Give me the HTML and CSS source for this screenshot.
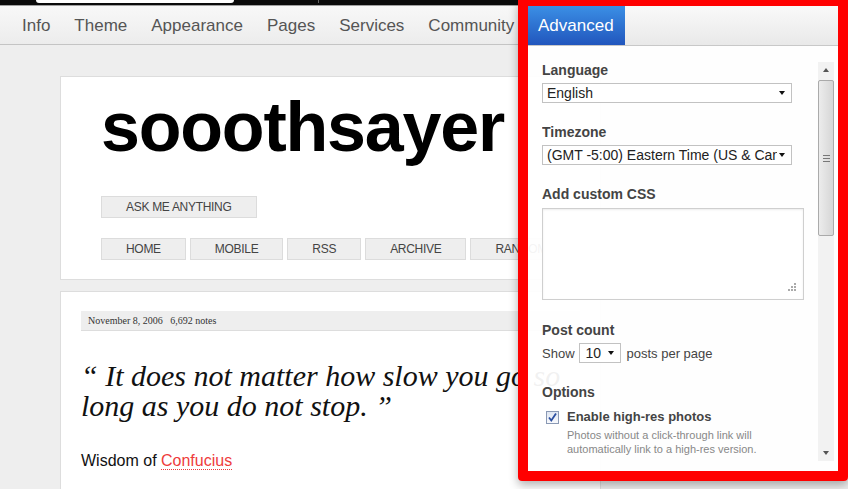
FILE: index.html
```html
<!DOCTYPE html>
<html lang="en">
<head>
    <meta charset="UTF-8">
    <meta name="viewport" content="width=device-width, initial-scale=1.0">
    <title>sooothsayer - Customize</title>
    <link rel="stylesheet" href="styles.css">
</head>
<body>

<div class="topbar">
    <span class="search"></span>
    <span class="tick"></span>
</div>

<nav class="menu">
    <a href="#">Info</a>
    <a href="#">Theme</a>
    <a href="#">Appearance</a>
    <a href="#">Pages</a>
    <a href="#">Services</a>
    <a href="#">Community</a>
</nav>

<main class="page">
    <div class="card blog-header">
        <h1 class="blog-title">sooothsayer</h1>
        <div class="button-row">
            <a class="btn" href="#">ASK ME ANYTHING</a>
        </div>
        <div class="button-row">
            <a class="btn" href="#">HOME</a>
            <a class="btn" href="#">MOBILE</a>
            <a class="btn" href="#">RSS</a>
            <a class="btn" href="#">ARCHIVE</a>
            <a class="btn" href="#">RANDOM</a>
        </div>
    </div>

    <div class="card post">
        <div class="post-meta">November 8, 2006 &nbsp; 6,692 notes</div>
        <blockquote class="quote">“ It does not matter how slow you go so long as you do not stop. ”</blockquote>
        <p class="source">Wisdom of <a href="#">Confucius</a></p>
    </div>
</main>

<aside class="panel">
    <div class="panel-tabs">
        <span class="tab active">Advanced</span>
    </div>
    <div class="panel-body">
        <div class="panel-content">
            <div class="field">
                <label>Language</label>
                <div class="select wide"><span class="select-text">English</span><span class="arrow"></span></div>
            </div>
            <div class="field">
                <label>Timezone</label>
                <div class="select wide"><span class="select-text">(GMT -5:00) Eastern Time (US &amp; Canada)</span><span class="arrow"></span></div>
            </div>
            <div class="field field-css">
                <label>Add custom CSS</label>
                <div class="textarea">
                    <svg class="grip" width="8" height="8" viewBox="0 0 8 8">
                        <rect x="6" y="0" width="2" height="2" fill="#aaa"/>
                        <rect x="3" y="3" width="2" height="2" fill="#aaa"/>
                        <rect x="6" y="3" width="2" height="2" fill="#aaa"/>
                        <rect x="0" y="6" width="2" height="2" fill="#aaa"/>
                        <rect x="3" y="6" width="2" height="2" fill="#aaa"/>
                        <rect x="6" y="6" width="2" height="2" fill="#aaa"/>
                    </svg>
                </div>
            </div>
            <div class="field">
                <label>Post count</label>
                <div class="inline-row">
                    <span>Show</span>
                    <div class="select small"><span class="select-text">10</span><span class="arrow"></span></div>
                    <span>posts per page</span>
                </div>
            </div>
            <div class="field">
                <label>Options</label>
                <div class="option">
                    <span class="checkbox">
                        <svg width="11" height="11" viewBox="0 0 11 11">
                            <path d="M2 5.5 L4.3 8.5 L9 1.5" fill="none" stroke="#2b4fa0" stroke-width="1.8"/>
                        </svg>
                    </span>
                    <div>
                        <div class="option-title">Enable high-res photos</div>
                        <div class="option-desc">Photos without a click-through link will automatically link to a high-res version.</div>
                    </div>
                </div>
            </div>
        </div>
        <div class="scrollbar">
            <span class="sb-btn"><span class="sb-up"></span></span>
            <span class="sb-thumb"><span class="sb-grip"></span></span>
            <span class="sb-space"></span>
            <span class="sb-btn"><span class="sb-down"></span></span>
        </div>
    </div>
</aside>

</body>
</html>
```

FILE: styles.css
```css
body {
    margin: 0;
    background-color: #eeeeee;
    font-family: "Liberation Sans", Arial, sans-serif;
    overflow: hidden;
}
a {
    text-decoration: none;
}

/* top strip */
.topbar {
    height: 5px;
    background-color: #0b0b0b;
    border-bottom: 1px solid #a0a0a0;
    display: flex;
    align-items: flex-start;
    padding-left: 36px;
}
.search {
    width: 198px;
    height: 3px;
    background-color: #fff;
    border-radius: 0 0 3px 3px;
}
.tick {
    width: 1px;
    height: 3px;
    margin-left: 84px;
    background-color: #666;
}

.menu {
    height: 36px;
    padding: 2px 0 0 10px;
    background: linear-gradient(#f8f8f8, #ececec);
    border-bottom: 1px solid #c4c4c4;
    display: flex;
    align-items: center;
}
.menu a {
    padding: 0 12px;
    font-size: 17px;
    color: #555;
}

/* blog preview */
.page {
    padding: 31px 0 0 60px;
}
.card {
    width: 541px;
    box-sizing: border-box;
    background-color: #fff;
    border: 1px solid #dddddd;
}
.blog-header {
    padding: 15px 40px 19px;
}
.blog-title {
    margin: 0 0 34px;
    font-size: 70px;
    line-height: 70px;
    font-weight: bold;
    letter-spacing: -1.2px;
    color: #000;
}
.button-row {
    display: flex;
    gap: 4px;
    margin-bottom: 20px;
}
.button-row:last-child {
    margin-bottom: 0;
}
.btn {
    flex-shrink: 0;
    height: 20px;
    line-height: 20px;
    padding: 0 24px;
    border: 1px solid #dcdcdc;
    background-color: #eeeeee;
    font-size: 12px;
    letter-spacing: -0.3px;
    color: #444;
}

.post {
    margin-top: 11px;
    padding: 19px 20px 40px;
}
.post-meta {
    height: 19px;
    line-height: 19px;
    padding-left: 7px;
    background-color: #eeeeee;
    border-bottom: 1px solid #dddddd;
    font-family: "Liberation Serif", "Times New Roman", serif;
    font-size: 10px;
    color: #333;
}
.quote {
    margin: 30px 0 0;
    font-family: "Liberation Serif", "Times New Roman", serif;
    font-style: italic;
    font-size: 30px;
    line-height: 30px;
    color: #111;
}
.source {
    margin: 30px 0 0;
    font-size: 16px;
    line-height: 20px;
    color: #111;
}
.source a {
    color: #ee3b3b;
    border-bottom: 1px dotted #ee3b3b;
}

/* customize panel */
.panel {
    position: absolute;
    top: 0;
    right: 0;
    width: 330px;
    height: 481px;
    box-sizing: border-box;
    border: solid #ff0000;
    border-width: 6px 10px 10px 10px;
    border-radius: 0 0 4px 4px;
    display: flex;
    flex-direction: column;
    box-shadow: 0 4px 10px rgba(0, 0, 0, 0.3);
}
.panel-tabs {
    height: 39px;
    flex-shrink: 0;
    display: flex;
    background: linear-gradient(#f9f9f9, #e9e9e9);
    border-bottom: 1px solid #c8c8c8;
}
.tab {
    padding: 0 11px 0 10px;
    line-height: 39px;
    font-size: 17px;
    color: #fff;
}
.tab.active {
    background: linear-gradient(#3b8fe5, #2156bd);
}
.panel-body {
    flex: 1;
    display: flex;
    padding: 16px 4px 10px 14px;
    background-color: rgba(255, 255, 255, 0.94);
    overflow: hidden;
}
.panel-content {
    flex: 1;
    overflow: hidden;
}
.field {
    margin-bottom: 21px;
}
.field label {
    display: block;
    margin-bottom: 5px;
    font-size: 14px;
    line-height: 16px;
    font-weight: bold;
    color: #444;
}
.field-css {
    margin-bottom: 22px;
}
.field-css label {
    margin-bottom: 6px;
}
.select {
    position: relative;
    height: 20px;
    box-sizing: border-box;
    border: 1px solid #c2c2c2;
    background-color: #fff;
    font-size: 14px;
    line-height: 18px;
    color: #222;
}
.select.wide {
    width: 250px;
}
.select.small {
    width: 42px;
}
.select-text {
    display: block;
    padding-left: 4px;
    margin-right: 4px;
    white-space: nowrap;
    overflow: hidden;
}
.small .select-text {
    padding-left: 6px;
}
.arrow {
    position: absolute;
    right: 2px;
    top: 0;
    width: 12px;
    height: 18px;
    background-color: #fff;
}
.arrow::after {
    content: "";
    position: absolute;
    left: 2px;
    top: 7px;
    border-style: solid;
    border-width: 4px 3.5px 0 3.5px;
    border-color: #111 transparent transparent transparent;
}
.textarea {
    position: relative;
    height: 92px;
    box-sizing: border-box;
    border: 1px solid #cfcfcf;
    box-shadow: inset 0 1px 2px rgba(0, 0, 0, 0.08);
    background-color: #fff;
}
.grip {
    position: absolute;
    right: 7px;
    bottom: 8px;
}
.inline-row {
    display: flex;
    align-items: center;
    gap: 4px;
    font-size: 13px;
    color: #444;
}
.inline-row .select {
    margin-right: 2px;
}
.option {
    display: flex;
    gap: 8px;
    margin-top: 8px;
    padding-left: 4px;
}
.checkbox {
    width: 13px;
    height: 13px;
    margin-top: 3px;
    flex-shrink: 0;
    box-sizing: border-box;
    border: 1px solid #8a99b4;
    background: linear-gradient(#dfe6f2, #f8f9fc);
    display: flex;
    align-items: center;
    justify-content: center;
}
.option-title {
    font-size: 13px;
    line-height: 18px;
    font-weight: bold;
    color: #444;
}
.option-desc {
    margin-top: 2px;
    font-size: 11px;
    line-height: 14px;
    color: #888;
}

/* fake scrollbar */
.scrollbar {
    width: 16px;
    margin-left: 14px;
    flex-shrink: 0;
    display: flex;
    flex-direction: column;
    background-color: #f2f2f2;
}
.sb-btn {
    height: 16px;
    display: flex;
    align-items: center;
    justify-content: center;
}
.sb-up {
    border-style: solid;
    border-width: 0 3.5px 4px 3.5px;
    border-color: transparent transparent #555 transparent;
}
.sb-down {
    border-style: solid;
    border-width: 4px 3.5px 0 3.5px;
    border-color: #555 transparent transparent transparent;
}
.sb-thumb {
    height: 156px;
    margin-top: 2px;
    box-sizing: border-box;
    border: 1px solid #aaa;
    border-radius: 2px;
    background: linear-gradient(to right, #ececec, #d6d6d6);
    display: flex;
    align-items: center;
    justify-content: center;
}
.sb-grip {
    width: 7px;
    height: 5px;
    border-top: 1px solid #777;
    border-bottom: 1px solid #777;
    position: relative;
}
.sb-grip::after {
    content: "";
    position: absolute;
    left: 0;
    right: 0;
    top: 2px;
    border-top: 1px solid #777;
}
.sb-space {
    flex: 1;
}
```
